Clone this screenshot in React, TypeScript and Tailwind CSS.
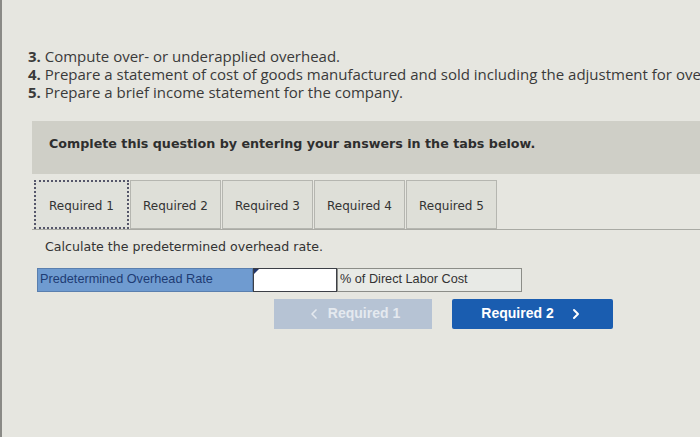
import { ChevronLeft, ChevronRight } from 'lucide-react';

const tabs = ['Required 1', 'Required 2', 'Required 3', 'Required 4', 'Required 5'];

export default function App() {
    return (
        <div className="w-[700px] h-[437px] overflow-hidden bg-[#e6e6e0] border-l-2 border-[#8a8a86]">
            {/* Instructions */}
            <div className="pt-[47px] pl-[26px] text-[15px] leading-[18px] text-[#3a3a3a] whitespace-nowrap" style={{ fontFamily: '"Open Sans", sans-serif' }}>
                <p><b className="font-bold">3.</b> Compute over- or underapplied overhead.</p>
                <p><b className="font-bold">4.</b> Prepare a statement of cost of goods manufactured and sold including the adjustment for over</p>
                <p><b className="font-bold">5.</b> Prepare a brief income statement for the company.</p>
            </div>

            {/* Question box */}
            <div className="ml-[30px] mt-[20px] h-[53px] bg-[#cfcfc7] flex items-center pl-[17px] pb-[8px]">
                <span className="text-[12.7px] font-bold text-[#2e2e2e]" style={{ fontFamily: '"DejaVu Sans", Verdana, sans-serif' }}>
                    Complete this question by entering your answers in the tabs below.
                </span>
            </div>

            {/* Tabs */}
            <div className="ml-[30px] mt-[6px] flex border-b border-[#a9aaa4] h-[50px]" style={{ fontFamily: '"DejaVu Sans", Verdana, sans-serif' }}>
                {tabs.map((t, i) => (
                    <div
                        key={t}
                        className={
                            i === 0
                                ? 'w-[95px] ml-[2px] border-2 border-dotted border-[#55566a] flex items-center justify-center pt-[3px] text-[12px] text-[#333] bg-[#e0e1db]'
                                : 'w-[91px] ml-[1px] border border-[#b5b6b0] flex items-center justify-center pt-[3px] text-[12px] text-[#333] bg-[#dedfd8]'
                        }
                    >
                        {t}
                    </div>
                ))}
            </div>

            {/* Body */}
            <div className="ml-[30px] pl-[13px] pt-[8px]">
                <p className="text-[12.6px] text-[#333]" style={{ fontFamily: '"DejaVu Sans", Verdana, sans-serif' }}>
                    Calculate the predetermined overhead rate.
                </p>

                <div className="mt-[11px] -ml-[8px] flex h-[24px] text-[12.7px]" style={{ fontFamily: '"Liberation Sans", Arial, sans-serif' }}>
                    <div className="w-[216px] bg-[#6f9bd0] border border-[#5a7fae] flex items-center pl-[2px] text-[#1e3c74]">
                        Predetermined Overhead Rate
                    </div>
                    <div className="w-[84px] bg-white border border-[#3c3f46] relative">
                        <span className="absolute left-0 top-0 w-0 h-0 border-t-[5px] border-r-[5px] border-t-[#22366a] border-r-transparent" />
                    </div>
                    <div className="w-[185px] border border-[#8c8d88] bg-[#e8eae6] flex items-center pl-[2px] text-[#333]">
                        % of Direct Labor Cost
                    </div>
                </div>

                <div className="mt-[7px] flex gap-[20px] pl-[229px] text-[14px] font-bold" style={{ fontFamily: '"Liberation Sans", Arial, sans-serif' }}>
                    <div className="w-[158px] h-[30px] bg-[#b6c3d4] flex items-center justify-center gap-[6px] text-[#e4e9ef]">
                        <ChevronLeft className="w-4 h-4" strokeWidth={2.5} />
                        Required 1
                    </div>
                    <div className="w-[161px] h-[30px] bg-[#1a5db0] flex items-center justify-center gap-[14px] text-white rounded-[2px]">
                        Required 2
                        <ChevronRight className="w-4 h-4" strokeWidth={3} />
                    </div>
                </div>
            </div>
        </div>
    );
}
